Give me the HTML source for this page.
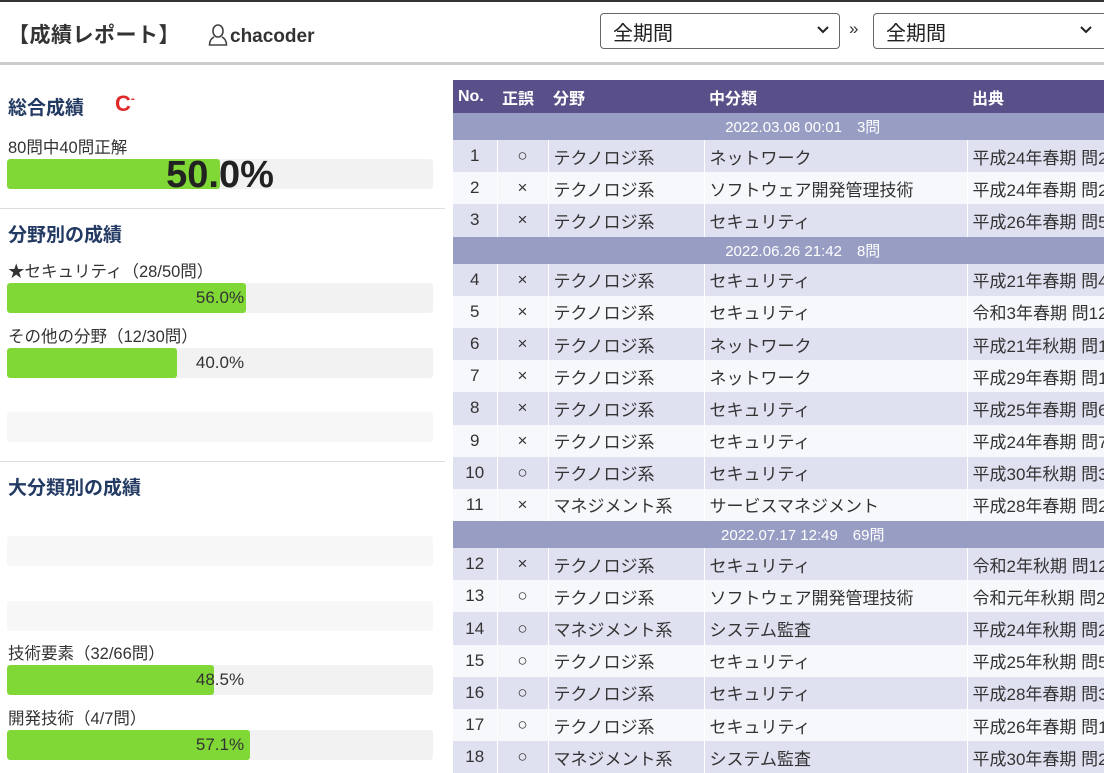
<!DOCTYPE html>
<html><head><meta charset="utf-8">
<style>
*{box-sizing:border-box;margin:0;padding:0}
body{width:1104px;height:765px;overflow:hidden;background:#fff;font-family:"Liberation Sans","Noto Sans CJK JP",sans-serif;color:#333;position:relative}
.topline{position:absolute;top:0;left:0;width:1104px;height:2px;background:#333}
.hdr{position:absolute;top:2px;left:0;width:1104px;height:60px}
.hdr h1{position:absolute;left:8px;top:17px;font-size:21px;font-weight:bold;color:#333;letter-spacing:0.5px}
.user{position:absolute;left:206px;top:21px;font-size:19px;font-weight:bold;color:#333}
.sel{position:absolute;top:11px;height:36px;border:1px solid #666;border-radius:4px;background:#fff;font-size:20px;padding:3px 12px;color:#222}
.chev{position:absolute;right:10px;top:12px}
.sep{position:absolute;top:62px;left:0;width:1104px;height:3px;background:#ccc}
.left{position:absolute;left:0;top:65px;width:445px}
h2{font-size:19px;font-weight:bold;color:#233a63;position:absolute;left:8px}
.lbl{position:absolute;left:8px;font-size:16.5px;color:#333}
.bar{position:absolute;left:7px;width:426px;height:30px;background:#f2f2f2;border-radius:3px;overflow:hidden}
.bar .f{position:absolute;left:0;top:0;bottom:0;background:#80d836;border-radius:3px}
.bar .t{position:absolute;left:0;right:0;top:0;text-align:center;font-size:17px;line-height:30px;color:#333}
.hr{position:absolute;left:0;width:445px;height:1px;background:#ddd}
table{position:absolute;left:453px;top:80px;border-collapse:collapse;font-size:17px;width:700px;table-layout:fixed}
td,th{height:32.2px;padding:0 5px;white-space:nowrap;overflow:hidden;border-right:1px solid #fff}
th{background:#5a5089;color:#fff;height:33px;text-align:left;font-size:16px;border-right:none}
tr.g td{background:#989dc4;color:#fff;text-align:center;font-size:15px;height:27px}
tr.a td{background:#dfe1f0}
tr.b td{background:#f7f8fc}
td.c{text-align:center}
</style></head><body>
<div class="topline"></div>
<div class="hdr">
<h1>【成績レポート】</h1>
<div class="user"><svg width="24" height="24" viewBox="0 0 22 24" style="vertical-align:-5px"><path d="M11 2c-3 0-5 2.5-5 6s2 6 5 6 5-2.5 5-6-2-6-5-6zM7 14c-3 1.5-4.5 4-4.5 8h17c0-4-1.5-6.5-4.5-8" fill="none" stroke="#444" stroke-width="1.6"/></svg>chacoder</div>
<div class="sel" style="left:600px;width:240px">全期間<svg class="chev" width="12" height="8" viewBox="0 0 12 8"><path d="M1 1l5 5 5-5" fill="none" stroke="#222" stroke-width="2"/></svg></div>
<div style="position:absolute;left:849px;top:17px;font-size:17px">»</div>
<div class="sel" style="left:873px;width:240px">全期間<svg class="chev" style="right:20px" width="12" height="8" viewBox="0 0 12 8"><path d="M1 1l5 5 5-5" fill="none" stroke="#222" stroke-width="2"/></svg></div>
</div>
<div class="sep"></div>
<div class="left">
<h2 style="top:28px">総合成績</h2>
<div style="position:absolute;left:115px;top:26px;color:#e02a2a;font-size:22px;font-weight:bold">C<sup style="font-size:12px">-</sup></div>
<div class="lbl" style="top:69px">80問中40問正解</div>
<div class="bar" style="top:94px"><div class="f" style="width:213px"></div><div class="t" style="font-size:38px;font-weight:bold;line-height:32px;color:#222">50.0%</div></div>
<div class="hr" style="top:143px"></div>
<h2 style="top:155px">分野別の成績</h2>
<div class="lbl" style="top:193px">★セキュリティ（28/50問）</div>
<div class="bar" style="top:218px"><div class="f" style="width:239px"></div><div class="t">56.0%</div></div>
<div class="lbl" style="top:258px">その他の分野（12/30問）</div>
<div class="bar" style="top:283px"><div class="f" style="width:170px"></div><div class="t">40.0%</div></div>
<div class="bar" style="top:347px;background:#f7f7f7"></div>
<div class="hr" style="top:396px"></div>
<h2 style="top:408px">大分類別の成績</h2>
<div class="bar" style="top:471px;background:#f7f7f7"></div>
<div class="bar" style="top:536px;background:#f7f7f7"></div>
<div class="lbl" style="top:575px">技術要素（32/66問）</div>
<div class="bar" style="top:600px"><div class="f" style="width:207px"></div><div class="t">48.5%</div></div>
<div class="lbl" style="top:640px">開発技術（4/7問）</div>
<div class="bar" style="top:665px"><div class="f" style="width:243px"></div><div class="t">57.1%</div></div>
</div>
<table>
<colgroup><col style="width:44px"><col style="width:51px"><col style="width:156px"><col style="width:263px"><col style="width:186px"></colgroup>
<tr><th>No.</th><th>正誤</th><th>分野</th><th>中分類</th><th>出典</th></tr>
<tr class="g"><td colspan="5">2022.03.08 00:01　3問</td></tr>
<tr class="a"><td class="c">1</td><td class="c">○</td><td>テクノロジ系</td><td>ネットワーク</td><td>平成24年春期 問2</td></tr>
<tr class="b"><td class="c">2</td><td class="c">×</td><td>テクノロジ系</td><td>ソフトウェア開発管理技術</td><td>平成24年春期 問2</td></tr>
<tr class="a"><td class="c">3</td><td class="c">×</td><td>テクノロジ系</td><td>セキュリティ</td><td>平成26年春期 問5</td></tr>
<tr class="g"><td colspan="5">2022.06.26 21:42　8問</td></tr>
<tr class="a"><td class="c">4</td><td class="c">×</td><td>テクノロジ系</td><td>セキュリティ</td><td>平成21年春期 問4</td></tr>
<tr class="b"><td class="c">5</td><td class="c">×</td><td>テクノロジ系</td><td>セキュリティ</td><td>令和3年春期 問12</td></tr>
<tr class="a"><td class="c">6</td><td class="c">×</td><td>テクノロジ系</td><td>ネットワーク</td><td>平成21年秋期 問1</td></tr>
<tr class="b"><td class="c">7</td><td class="c">×</td><td>テクノロジ系</td><td>ネットワーク</td><td>平成29年春期 問1</td></tr>
<tr class="a"><td class="c">8</td><td class="c">×</td><td>テクノロジ系</td><td>セキュリティ</td><td>平成25年春期 問6</td></tr>
<tr class="b"><td class="c">9</td><td class="c">×</td><td>テクノロジ系</td><td>セキュリティ</td><td>平成24年春期 問7</td></tr>
<tr class="a"><td class="c">10</td><td class="c">○</td><td>テクノロジ系</td><td>セキュリティ</td><td>平成30年秋期 問3</td></tr>
<tr class="b"><td class="c">11</td><td class="c">×</td><td>マネジメント系</td><td>サービスマネジメント</td><td>平成28年春期 問2</td></tr>
<tr class="g"><td colspan="5">2022.07.17 12:49　69問</td></tr>
<tr class="a"><td class="c">12</td><td class="c">×</td><td>テクノロジ系</td><td>セキュリティ</td><td>令和2年秋期 問12</td></tr>
<tr class="b"><td class="c">13</td><td class="c">○</td><td>テクノロジ系</td><td>ソフトウェア開発管理技術</td><td>令和元年秋期 問2</td></tr>
<tr class="a"><td class="c">14</td><td class="c">○</td><td>マネジメント系</td><td>システム監査</td><td>平成24年秋期 問2</td></tr>
<tr class="b"><td class="c">15</td><td class="c">○</td><td>テクノロジ系</td><td>セキュリティ</td><td>平成25年秋期 問5</td></tr>
<tr class="a"><td class="c">16</td><td class="c">○</td><td>テクノロジ系</td><td>セキュリティ</td><td>平成28年春期 問3</td></tr>
<tr class="b"><td class="c">17</td><td class="c">○</td><td>テクノロジ系</td><td>セキュリティ</td><td>平成26年春期 問1</td></tr>
<tr class="a"><td class="c">18</td><td class="c">○</td><td>マネジメント系</td><td>システム監査</td><td>平成30年春期 問2</td></tr>
</table>
</body></html>
